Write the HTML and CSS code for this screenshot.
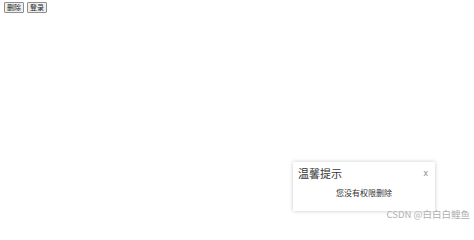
FILE: index.html
```html
<!DOCTYPE html>
<html lang="zh">
<head>
<meta charset="utf-8">
<title>权限提示</title>
<link rel="stylesheet" href="styles.css">
</head>
<body>
<div class="toolbar">
  <button class="btn">删除</button>
  <button class="btn">登录</button>
</div>
<div class="dialog">
  <div class="dialog-head">
    <span class="dialog-title">温馨提示</span>
    <span class="dialog-close">x</span>
  </div>
  <div class="dialog-body">您没有权限删除</div>
</div>
<div class="watermark">CSDN @白白白鲤鱼</div>
</body>
</html>
```
FILE: styles.css
```css
html, body {
  margin: 0;
  padding: 0;
  background: #fff;
}
body {
  font-family: "Noto Sans CJK SC", "Liberation Sans", sans-serif;
  width: 474px;
  height: 222px;
  overflow: hidden;
}
.toolbar {
  display: flex;
  gap: 3px;
  padding: 2px 4px;
}
.btn {
  font-family: "Noto Sans CJK SC", sans-serif;
  font-size: 7px;
  line-height: 9px;
  padding: 0 2px;
  height: 11px;
  border: 1px solid #8f8f8f;
  border-radius: 1px;
  background: #efefef;
  color: #222;
}
.dialog {
  position: absolute;
  left: 293px;
  top: 162px;
  width: 142px;
  height: 49px;
  background: #fff;
  box-shadow: 0 0 4px rgba(0,0,0,0.22);
  display: flex;
  flex-direction: column;
}
.dialog-head {
  display: flex;
  justify-content: space-between;
  align-items: center;
  padding: 4px 7px 0 5px;
  height: 14px;
}
.dialog-title {
  font-size: 11px;
  color: #333;
}
.dialog-close {
  font-family: "Liberation Sans", sans-serif;
  font-size: 9px;
  color: #888;
}
.dialog-body {
  text-align: center;
  font-size: 8px;
  color: #333;
  padding-top: 7px;
}
.watermark {
  position: absolute;
  right: 4px;
  top: 207px;
  font-size: 9.5px;
  color: #b0b0b0;
}
```
